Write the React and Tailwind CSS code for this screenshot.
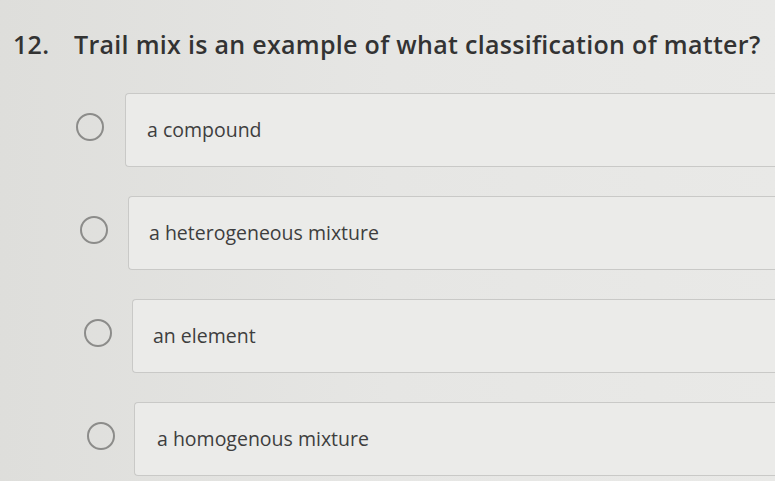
export default function App() {
  const options = [
    { t: "a compound", cl: "ml-[76px]", bl: "ml-[21px]", pl: "pl-[21px]" },
    { t: "a heterogeneous mixture", cl: "ml-[80px]", bl: "ml-[20px]", pl: "pl-[20px]" },
    { t: "an element", cl: "ml-[84px]", bl: "ml-[20px]", pl: "pl-[20px]" },
    { t: "a homogenous mixture", cl: "ml-[87px]", bl: "ml-[19px]", pl: "pl-[22px]" },
  ];
  return (
    <div
      className="w-[775px] h-[481px] overflow-hidden bg-gradient-to-r from-[#dededb] via-[#e6e6e4] to-[#e9e9e7] text-[#3a3a3a]"
      style={{ fontFamily: '"Open Sans", "Liberation Sans", sans-serif' }}
    >
      <div className="flex items-baseline pt-[28px] pl-[13px] text-[25px] tracking-[0.3px] font-semibold leading-[32px] text-[#333333]">
        <span className="w-[61px]">12.</span>
        <span>Trail mix is an example of what classification of matter?</span>
      </div>
      <div className="mt-[33px] flex flex-col gap-[29px]">
        {options.map((o, i) => (
          <div key={i} className="flex items-center">
            <div
              className={`${o.cl} w-[28px] h-[28px] shrink-0 rounded-full border-2 border-[#8c8c8a] -translate-y-[3px]`}
            />
            <div
              className={`${o.bl} ${o.pl} flex-1 h-[74px] flex items-center rounded-l-[4px] border border-r-0 border-[#c9c9c7] bg-[#ebebe9] text-[19.5px] text-[#3e3e3e]`}
            >
              {o.t}
            </div>
          </div>
        ))}
      </div>
    </div>
  );
}
